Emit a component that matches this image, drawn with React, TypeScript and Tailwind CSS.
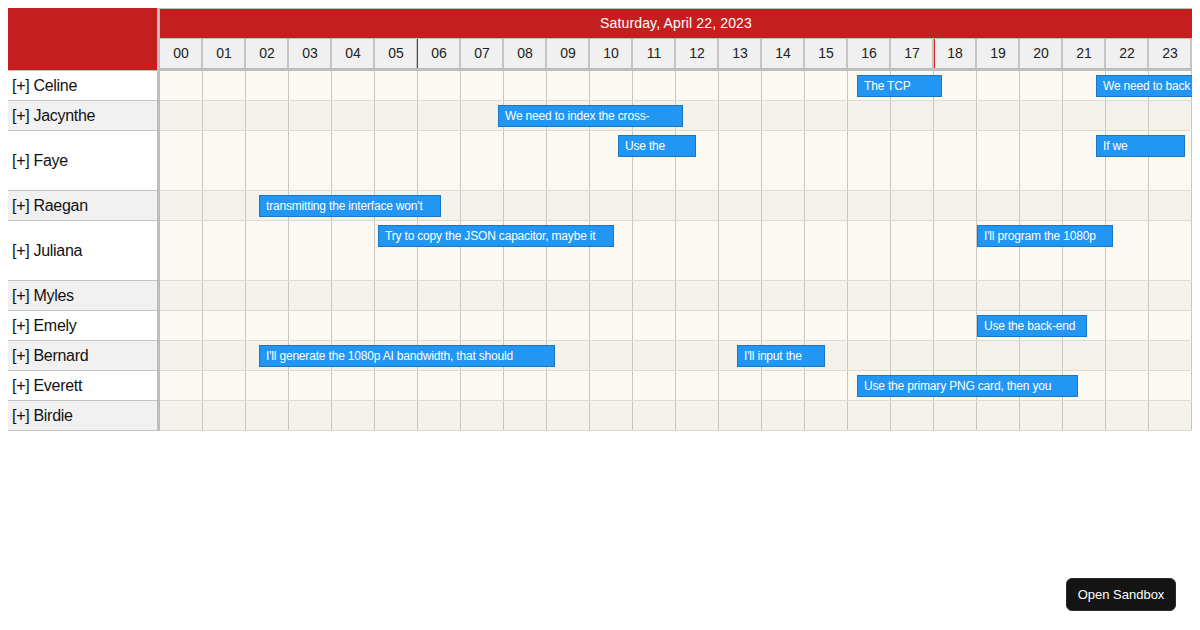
import React from "react";

type Ev = { left: number; width: number; text: string };
type Row = { name: string; tall?: boolean; events: Ev[] };

const rows: Row[] = [
  { name: "Celine", events: [{ left: 697, width: 85, text: "The TCP" }, { left: 936, width: 120, text: "We need to back" }] },
  { name: "Jacynthe", events: [{ left: 338, width: 185, text: "We need to index the cross-" }] },
  { name: "Faye", tall: true, events: [{ left: 458, width: 78, text: "Use the" }, { left: 936, width: 89, text: "If we" }] },
  { name: "Raegan", events: [{ left: 99, width: 182, text: "transmitting the interface won't" }] },
  { name: "Juliana", tall: true, events: [{ left: 218, width: 236, text: "Try to copy the JSON capacitor, maybe it" }, { left: 817, width: 136, text: "I'll program the 1080p" }] },
  { name: "Myles", events: [] },
  { name: "Emely", events: [{ left: 817, width: 110, text: "Use the back-end" }] },
  { name: "Bernard", events: [{ left: 99, width: 296, text: "I'll generate the 1080p AI bandwidth, that should" }, { left: 577, width: 88, text: "I'll input the" }] },
  { name: "Everett", events: [{ left: 697, width: 221, text: "Use the primary PNG card, then you" }] },
  { name: "Birdie", events: [] },
];

const hours = Array.from({ length: 24 }, (_, i) => String(i).padStart(2, "0"));

export default function App() {
  return (
    <div className="p-2 font-['Liberation_Sans',Arial,sans-serif] text-[#111]">
      <div className="flex">
        {/* left column */}
        <div className="w-[149px] flex flex-col">
          <div className="h-[63px] bg-[#c41f1f] border-b border-[#bdbdbd]" />
          {rows.map((r, i) => (
            <div
              key={r.name}
              className={`${r.tall ? "h-[60px]" : "h-[30px]"} ${i % 2 === 0 ? "bg-white" : "bg-[#f1f1f1]"} border-b border-[#c4c4c4] flex items-center pl-1 text-[16px] leading-none tracking-[-0.3px]`}
            >
              [+] {r.name}
            </div>
          ))}
        </div>
        <div className="w-[3px] bg-[#bdbdbd]" />
        {/* grid */}
        <div className="w-[1032px] overflow-hidden">
          <div className="h-[30px] border-t border-[#bdbdbd] bg-[#c41f1f] text-white text-[14px] tracking-[0.15px] flex items-center justify-center">
            Saturday, April 22, 2023
          </div>
          <div className="relative h-[33px] border-t border-b-[3px] border-[#bdbdbd] flex bg-[#f0f0f0]">
            {hours.map((h) => (
              <div key={h} className="w-[43px] shrink-0 border-r-2 border-[#c4c4c4] flex items-center justify-center pl-px text-[14px] text-[#222]">
                {h}
              </div>
            ))}
            <div className="absolute top-0 bottom-0 left-[257px] w-px bg-[#b71c1c]" />
            <div className="absolute top-0 bottom-0 left-[774px] w-px bg-[#d92020]" />
          </div>
          {rows.map((r, i) => (
            <div
              key={r.name}
              className={`relative ${r.tall ? "h-[60px]" : "h-[30px]"} ${i % 2 === 0 ? "bg-[#fbf9f2]" : "bg-[#f4f2ea]"} border-b border-[#dddad2] flex`}
            >
              {hours.map((h) => (
                <div key={h} className="w-[43px] shrink-0 border-r border-[#c6c6c6]" />
              ))}
              {r.events.map((e) => (
                <div
                  key={e.text}
                  className="absolute top-[4px] h-[22px] bg-[#2196f3] border border-[#1b77c4] text-white text-[12px] leading-[21px] pl-[6px] tracking-[-0.18px] whitespace-nowrap overflow-hidden"
                  style={{ left: e.left, width: e.width }}
                >
                  {e.text}
                </div>
              ))}
            </div>
          ))}
        </div>
      </div>
      <button className="fixed right-[24px] bottom-[19px] w-[110px] h-[33px] rounded-md bg-[#141414] border border-[#2a2a2a] text-white text-[13px] font-['Liberation_Sans',Arial,sans-serif]">
        Open Sandbox
      </button>
    </div>
  );
}
